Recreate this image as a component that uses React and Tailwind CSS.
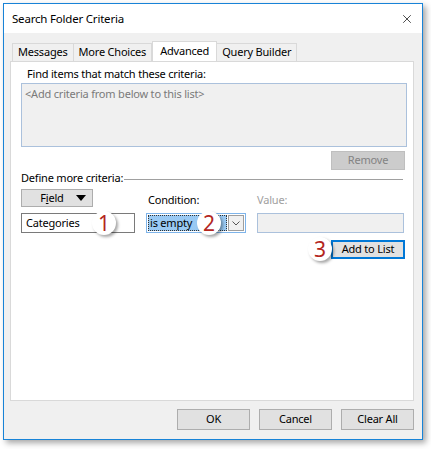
import { X } from 'lucide-react';

const font = { fontFamily: '"Noto Sans", "Open Sans", sans-serif' };

const Tab = ({ label, active }) => (
    <div
        className={
            active
                ? 'h-[20px] -mb-px px-[7px] bg-white border border-b-0 border-[#d9d9d9] flex items-start pt-[1px] relative z-10'
                : 'h-[18px] mt-[2px] px-[5px] bg-[#f0f0f0] border border-b-0 border-[#d9d9d9] -ml-px first:ml-0 flex items-center'
        }
    >
        {label}
    </div>
);

const Button = ({ children, className = '', disabled }) => (
    <div
        className={
            'flex items-center justify-center border ' +
            (disabled ? 'bg-[#cccccc] border-[#bfbfbf] text-[#838383] ' : 'bg-[#e1e1e1] border-[#adadad] text-black ') +
            className
        }
    >
        {children}
    </div>
);

const Badge = ({ n, className }) => (
    <div
        className={
            'absolute w-[24px] h-[24px] rounded-full bg-white flex items-center justify-center text-[21px] leading-none text-[#b3261e] tracking-normal shadow-[2px_2px_3px_rgba(0,0,0,0.35)] ' +
            className
        }
    >
        {n}
    </div>
);

export default function App() {
    return (
        <div className="w-[431px] h-[449px] bg-white pt-[3px] pl-[3px] text-[11px] tracking-[-0.2px] text-black" style={font}>
            <div className="w-[420px] h-[437px] border border-[#1883d7] bg-[#f0f0f0] flex flex-col shadow-[3px_3px_6px_rgba(0,0,0,0.35)]">
                {/* title bar */}
                <div className="h-[29px] bg-white flex items-center justify-between pl-[8px] pr-[8px] shrink-0">
                    <span className="text-[11.5px]">Search Folder Criteria</span>
                    <X size={14} strokeWidth={1.2} />
                </div>

                <div className="flex flex-col pl-[6px] pr-[8px] pt-[8px]">
                    {/* tabs */}
                    <div className="flex items-start pl-[2px] h-[20px]">
                        <Tab label="Messages" />
                        <Tab label="More Choices" />
                        <Tab label="Advanced" active />
                        <Tab label="Query Builder" />
                    </div>

                    {/* tab panel */}
                    <div className="h-[340px] bg-white border border-[#d9d9d9] flex flex-col pl-[10px] pr-[6px] relative">
                        <div className="pl-[6px] pt-[5px] leading-[14px]">Find items that match these criteria:</div>
                        <div className="mt-[2px] h-[64px] bg-[#f0f0f0] border border-[#abc1dc] px-[3px] pt-[2px] text-[#7a7a7a]">
                            &lt;Add criteria from below to this list&gt;
                        </div>
                        <div className="flex justify-end pr-[2px] mt-[4px]">
                            <Button disabled className="w-[74px] h-[19px]">Remove</Button>
                        </div>
                        <div className="flex items-center gap-[1px] mt-[1px] pr-[4px] leading-[14px]">
                            <span>Define more criteria:</span>
                            <div className="flex-1 h-px bg-[#a0a0a0] mt-[2px]" />
                        </div>

                        <div className="flex mt-[4px] gap-[11px]">
                            {/* field column */}
                            <div className="flex flex-col w-[114px]">
                                <Button className="w-[72px] h-[18px] relative">
                                    <span className="ml-[-10px]">
                                        F<span className="underline">i</span>eld
                                    </span>
                                    <span className="absolute right-[6px] top-[5px] w-0 h-0 border-l-[5px] border-r-[5px] border-t-[6px] border-l-transparent border-r-transparent border-t-black" />
                                </Button>
                                <div className="mt-[6px] h-[20px] border border-[#7a7a7a] bg-white flex items-center pl-[4px] relative">
                                    Categories
                                    <Badge n="1" className="left-[70px] top-[-3px]" />
                                </div>
                            </div>

                            {/* condition column */}
                            <div className="flex flex-col w-[100px]">
                                <div className="h-[18px] flex items-end leading-[14px] pl-[2px]">Condition:</div>
                                <div className="mt-[6px] h-[20px] border border-[#7eb4ea] bg-white flex items-center p-[1px] relative">
                                    <div className="h-full w-[79px] bg-[#99c9f3] outline-dotted outline-1 outline-[#333] -outline-offset-1 flex items-center pl-[2px]">
                                        is empty
                                    </div>
                                    <div className="ml-[1px] h-full w-[16px] border border-[#9e9e9e] bg-[#f0f0f0] flex items-center justify-center">
                                        <svg width="8" height="5" viewBox="0 0 8 5">
                                            <path d="M0.5 0.5 L4 4 L7.5 0.5" fill="none" stroke="#555" strokeWidth="1" />
                                        </svg>
                                    </div>
                                    <Badge n="2" className="left-[50px] top-[-3px]" />
                                </div>
                            </div>

                            {/* value column */}
                            <div className="flex flex-col w-[147px]">
                                <div className="h-[18px] flex items-end leading-[14px] text-[#a0a0a0]">Value:</div>
                                <div className="mt-[6px] h-[20px] border border-[#abc1dc] bg-[#f0f0f0]" />
                            </div>
                        </div>

                        <div className="flex justify-end pr-[2px] mt-[7px] relative">
                            <Badge n="3" className="left-[287px] top-[-3px]" />
                            <Button className="w-[74px] h-[19px] !border-[#0078d7] border-2">Add to List</Button>
                        </div>
                    </div>

                    {/* footer buttons */}
                    <div className="flex justify-end gap-[9px] mt-[8px]">
                        <Button className="w-[73px] h-[21px]">OK</Button>
                        <Button className="w-[73px] h-[21px]">Cancel</Button>
                        <Button className="w-[73px] h-[21px]">Clear All</Button>
                    </div>
                </div>
            </div>
        </div>
    );
}
